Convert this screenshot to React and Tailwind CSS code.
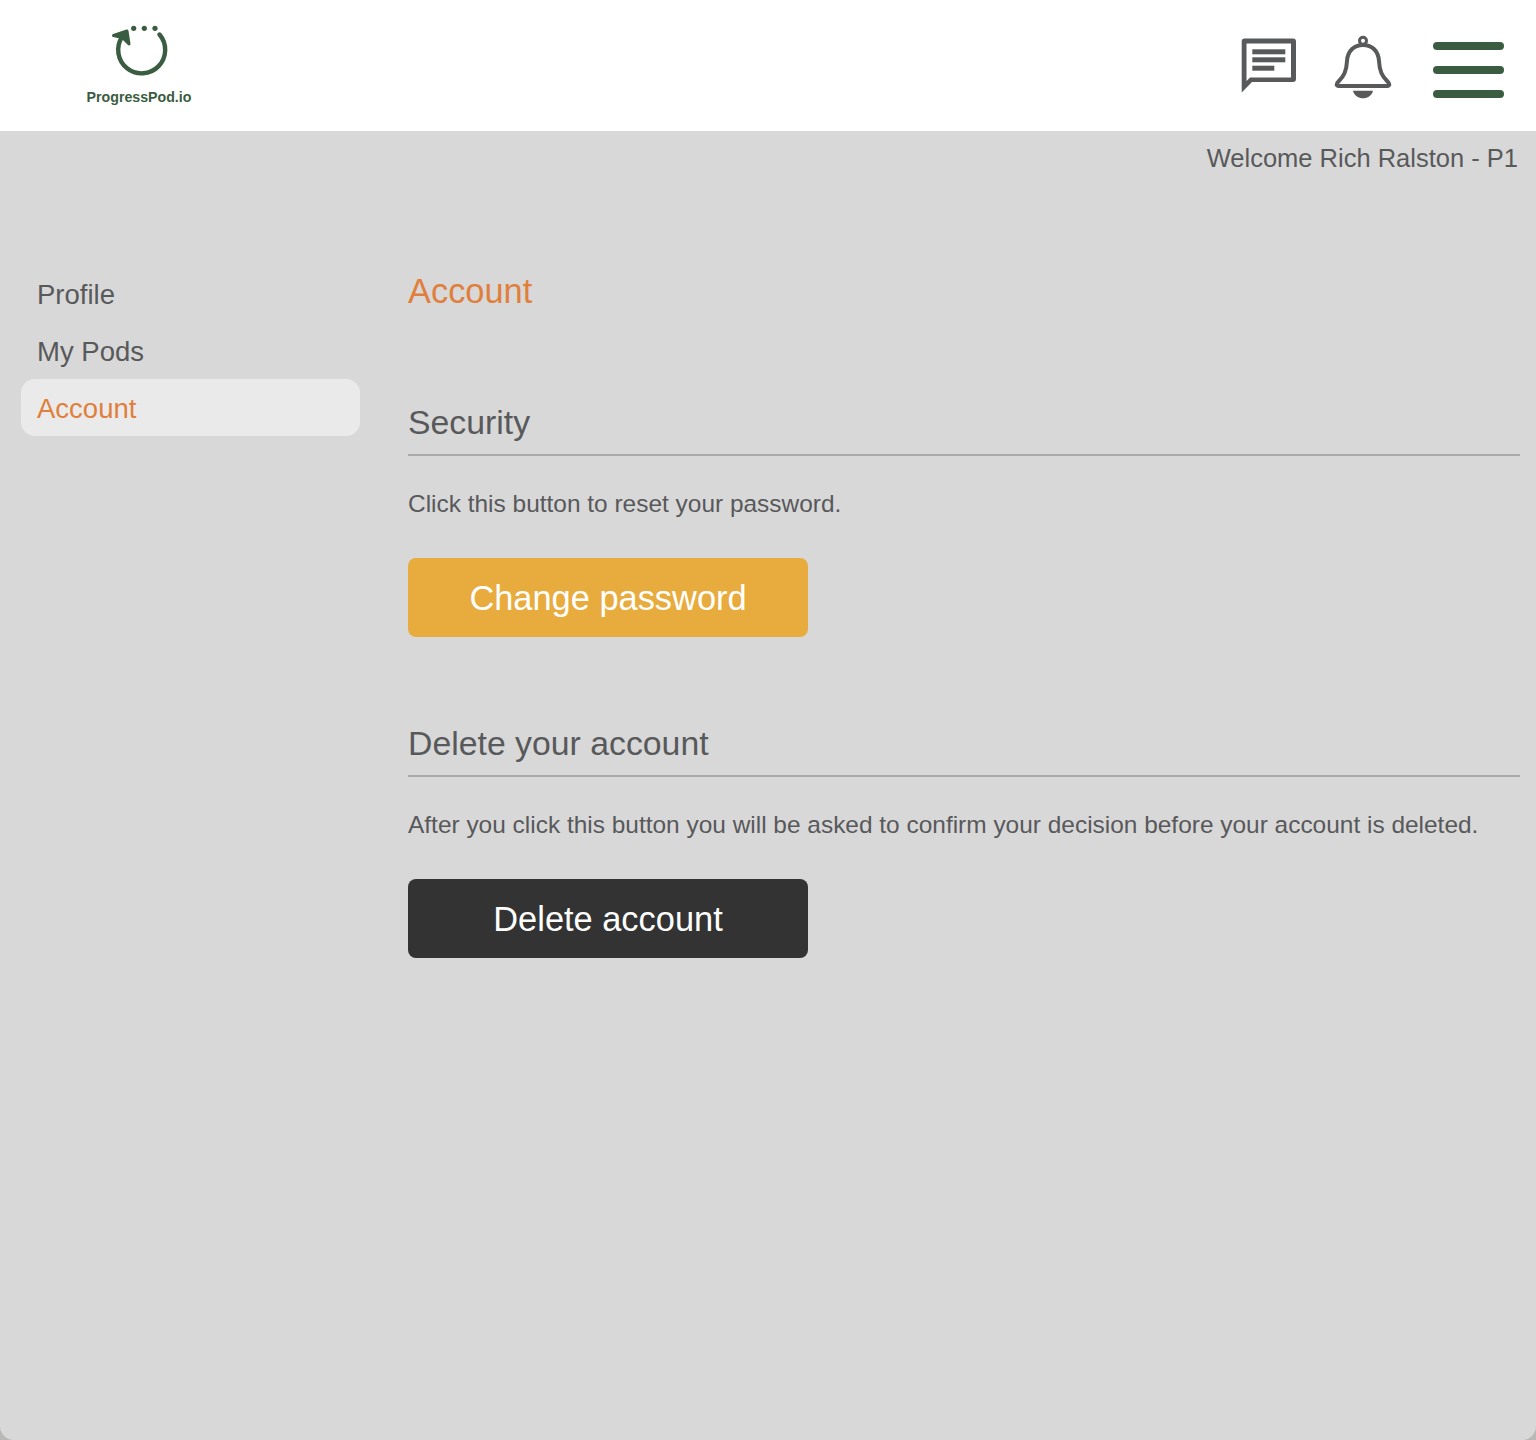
import React from 'react';

const Logo = () => (
  <svg width="64" height="60" viewBox="0 0 64 60" fill="none" className="block">
    <path d="M52.500 14.500A23.500 23.500 0 1 1 15 17" stroke="#3a5c40" strokeWidth="4.400" strokeLinecap="round" />
    <path d="M6.500 15.500L20 11L22 24L15.500 17.500Z" fill="#3a5c40" stroke="#3a5c40" strokeWidth="3" strokeLinejoin="round" />
    <circle cx="26.700" cy="8.300" r="2.600" fill="#3a5c40" />
    <circle cx="37.300" cy="8.300" r="2.600" fill="#3a5c40" />
    <circle cx="48" cy="8.300" r="2.600" fill="#3a5c40" />
  </svg>
);

const ChatIcon = () => (
  <svg width="56" height="55" viewBox="0 0 56 55" fill="none" className="block">
    <path
      fillRule="evenodd"
      d="M3.500 0.500H52A3 3 0 0 1 55 3.500V41A3 3 0 0 1 52 44H11L0.700 54.500V3.500A3 3 0 0 1 3.500 0.500ZM5.500 5.500V43L9 39.500H50V5.500Z"
      fill="#58595b"
    />
    <rect x="11.300" y="11.300" width="33" height="5" fill="#58595b" />
    <rect x="11.300" y="19.300" width="33" height="5" fill="#58595b" />
    <rect x="11.300" y="27.700" width="22" height="5" fill="#58595b" />
  </svg>
);

const BellIcon = () => (
  <svg width="58" height="64" viewBox="0 0 58 64" fill="none" className="block">
    <circle cx="29" cy="5.700" r="3.500" stroke="#58595b" strokeWidth="3" />
    <path
      d="M29 10C20 10 13.500 16 13 26C12.500 36 10 41 4.500 46.500C1.500 49.500 2.500 51 6 51H52C55.500 51 56.500 49.500 53.500 46.500C48 41 45.500 36 45 26C44.500 16 38 10 29 10Z"
      stroke="#58595b"
      strokeWidth="4"
      strokeLinejoin="round"
    />
    <path d="M19 55.700H39C38 60.500 33.500 63.300 29 63.300C24.500 63.300 20 60.500 19 55.700Z" fill="#58595b" />
  </svg>
);

const MenuIcon = () => (
  <div className="flex w-[71px] flex-col gap-[16px]">
    <div className="h-2 rounded-full bg-[#3a5c40]" />
    <div className="h-2 rounded-full bg-[#3a5c40]" />
    <div className="h-2 rounded-full bg-[#3a5c40]" />
  </div>
);

const menuItems = [
  { text: 'Profile' },
  { text: 'My Pods' },
  { text: 'Account', active: true },
];

const Section = ({ title, text, button, buttonClass }) => (
  <section>
    <h2 className="border-b-2 border-[#a9a9a9] pb-[13px] text-[33.800px] leading-[38px] text-[#58595b]">
      {title}
    </h2>
    <p className="mt-[31px] text-[24.450px] leading-[34px] text-[#58595b]">{text}</p>
    <button className={`mt-[37px] block h-[79px] w-[400px] rounded-lg pt-[3px] text-[34.400px] text-white ${buttonClass}`}>
      {button}
    </button>
  </section>
);

export default function App() {
  return (
    <div className="h-[1440px] overflow-hidden bg-[#b8b8b4] font-['Liberation_Sans',Arial,sans-serif]">
      <div className="flex h-full flex-col overflow-hidden rounded-bl-[14px] rounded-br-[14px] bg-[#d8d8d8]">
        <header className="flex h-[131px] shrink-0 items-start justify-between bg-white pl-[85px] pr-[32px]">
          <div className="flex w-[108px] flex-col items-center pt-[20px]">
            <Logo />
            <span className="mt-[8px] whitespace-nowrap text-[14.200px] font-bold leading-[18px] text-[#3a5c40]">ProgressPod.io</span>
          </div>
          <div className="flex items-start">
            <div className="mr-[37px] mt-[38px]"><ChatIcon /></div>
            <div className="mr-[41px] mt-[35px]"><BellIcon /></div>
            <div className="mt-[42px]"><MenuIcon /></div>
          </div>
        </header>

        <div className="flex justify-end pr-[18px] pt-[10px] text-[25.500px] leading-[34px] text-[#58595b]">
          Welcome Rich Ralston - P1
        </div>

        <div className="flex pl-[21px] pr-[16px] pt-[90px]">
          <nav className="w-[339px] shrink-0">
            {menuItems.map((item) => (
              <div
                key={item.text}
                className={`flex h-[57px] items-center rounded-[14px] pl-[16px] pt-[2px] text-[27.500px] ${item.active ? 'bg-[#eaeaea] text-[#e07f3c]' : 'text-[#58595b]'}`}
              >
                {item.text}
              </div>
            ))}
          </nav>

          <main className="ml-[48px] flex-1 pt-[7px]">
            <h1 className="h-[38px] text-[34.400px] leading-[38px] text-[#e07f3c]">Account</h1>
            <div className="mt-[93px]">
              <Section
                title="Security"
                text="Click this button to reset your password."
                button="Change password"
                buttonClass="bg-[#e8ac3e]"
              />
            </div>
            <div className="mt-[87px]">
              <Section
                title="Delete your account"
                text="After you click this button you will be asked to confirm your decision before your account is deleted."
                button="Delete account"
                buttonClass="bg-[#333333]"
              />
            </div>
          </main>
        </div>
      </div>
    </div>
  );
}
